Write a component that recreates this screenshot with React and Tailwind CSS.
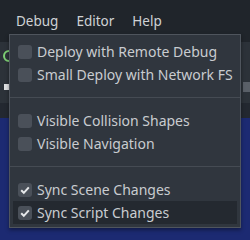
import React from 'react';

const items = [
  { label: 'Deploy with Remote Debug', checked: false },
  { label: 'Small Deploy with Network FS', checked: false },
  { sep: true },
  { label: 'Visible Collision Shapes', checked: false },
  { label: 'Visible Navigation', checked: false },
  { sep: true },
  { label: 'Sync Scene Changes', checked: true },
  { label: 'Sync Script Changes', checked: true, hover: true },
];

function Check({ checked }) {
  return (
    <span className="w-[14px] h-[14px] rounded-[3px] bg-[#4a5059] flex items-center justify-center shrink-0">
      {checked && (
        <svg width="14" height="14" viewBox="0 0 14 14">
          <path d="M3.2 7.3 L5.8 9.8 L10.8 4.3" fill="none" stroke="#e6e8ea" strokeWidth="2" />
        </svg>
      )}
    </span>
  );
}

export default function App() {
  return (
    <div className="relative w-[250px] h-[240px] overflow-hidden bg-[#1c2a72] font-['Noto_Sans',sans-serif]">
      {/* Menu bar */}
      <div className="h-[42px] bg-[#20252b] flex items-center pl-4 gap-[18px] text-[13.5px] text-[#cfd2d5]">
        <span>Debug</span>
        <span>Editor</span>
        <span>Help</span>
      </div>

      {/* Toolbar behind the menu */}
      <div className="h-[61px] bg-[#2c3239] flex justify-between items-start">
        <div className="flex flex-col items-start gap-[22px] pt-[8px] pl-[3px]">
          <span className="w-[12px] h-[12px] rounded-full border-2 border-[#7ed075]" />
          <span className="ml-[1px] w-[5px] h-[6px] bg-[#dfe1e3]" />
        </div>
        <div className="flex items-start pt-[36px]">
          <div className="flex flex-col gap-[11px] mr-[3px]">
            <span className="w-[2px] h-[2px] bg-[#e6e8ea]" />
            <span className="w-[2px] h-[2px] bg-[#e6e8ea]" />
          </div>
          <span className="mt-[4px] w-[7px] h-[10px] bg-[#5a6068]" />
        </div>
      </div>
      <div className="h-[15px] bg-[#232830]" />

      {/* Debug popup */}
      <div className="absolute left-[9px] top-[34px] w-[232px] border border-[#4f555d] bg-[#30363e] pt-[5px] pb-[3px] px-[3px] text-[14px] text-[#c9ccd0] shadow-[0_2px_4px_rgba(0,0,0,0.4)]">
        {items.map((it, i) =>
          it.sep ? (
            <div key={i} className="h-[23px] flex items-center -mx-[3px]">
              <div className="h-px w-full bg-[#454b53]" />
            </div>
          ) : (
            <div
              key={i}
              className={`h-[23px] flex items-center pl-[5px] gap-[5px] ${it.hover ? 'bg-[#242930]' : ''}`}
            >
              <Check checked={it.checked} />
              <span className="leading-none whitespace-nowrap">{it.label}</span>
            </div>
          )
        )}
      </div>
    </div>
  );
}
